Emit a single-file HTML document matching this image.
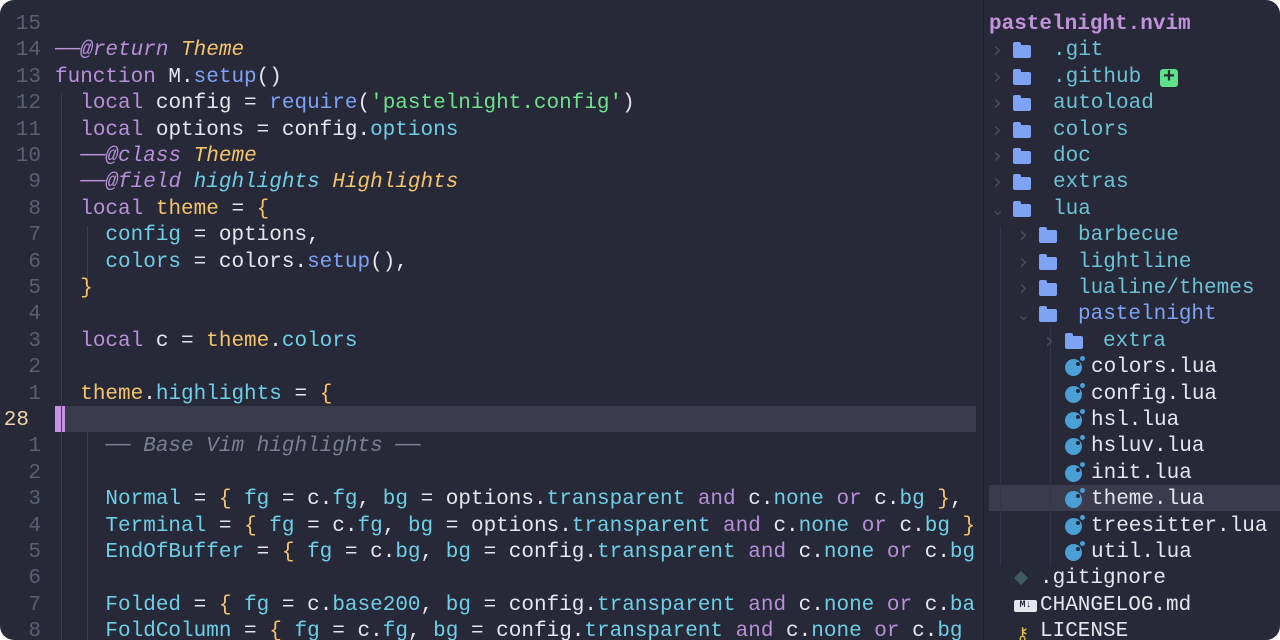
<!DOCTYPE html>
<html><head><meta charset="utf-8"><style>
html,body{margin:0;padding:0;background:#fff;}
#w{position:relative;width:1280px;height:640px;background:#272838;border-radius:14px;overflow:hidden;font-family:"Liberation Mono",monospace;font-size:21px;}
.l{position:absolute;left:0;height:26.4px;line-height:26.4px;white-space:pre;color:#e6e6ee;margin-top:2px}
.n{position:absolute;width:41px;text-align:right;color:#5c5f70;}
.t{position:absolute;left:55px;}
.k{color:#b690d8}.f{color:#7ea2f4}.s{color:#6ee28c}.p{color:#6ed0e6}.y{color:#f4c56c}.c{color:#7c7f90;font-style:italic}.ci{font-style:italic}
.g{position:absolute;width:1px;background:#3c3e50;}
.r{position:absolute;height:26.4px;line-height:26.4px;white-space:pre;color:#6cc3d3;margin-top:2px}
.ch{position:absolute;color:#4a4c5e;font-size:22px;font-family:"DejaVu Sans",sans-serif}
.fd{position:absolute;width:18px;height:13px;background:#7ea2f4;border-radius:2px;margin-top:7px}
.fd:before{content:"";position:absolute;left:0;top:-3px;width:8px;height:4px;background:#7ea2f4;border-radius:2px 2px 0 0}
.lu{position:absolute;width:17px;height:17px;border-radius:50%;background:#4a9fd6;margin-top:4px}
.lu:after{content:"";position:absolute;right:2px;top:3px;width:4px;height:4px;border-radius:50%;background:#272838}
.lu:before{content:"";position:absolute;right:-3px;top:-3px;width:5px;height:5px;border-radius:50%;background:#4a9fd6}
</style></head><body><div id="w">
<div style="position:absolute;left:55px;top:406px;width:921px;height:26.4px;background:#3a3c4e"></div>
<div style="position:absolute;left:55px;top:406px;width:10px;height:26.4px;background:#c992e4"></div>
<div style="position:absolute;left:983px;top:0;width:1px;height:640px;background:#1e1f2c"></div>
<div style="position:absolute;left:989px;top:485px;width:291px;height:26.4px;background:#3a3c4e"></div>
<div class="g" style="left:61px;top:94px;height:546px"></div>
<div class="g" style="left:87px;top:226px;height:53px"></div>
<div class="g" style="left:87px;top:432px;height:208px"></div>
<div class="g" style="left:1000px;top:226px;height:340px;background:#33354a"></div>
<div class="g" style="left:1050px;top:326px;height:240px;background:#33354a"></div>

<div class="l" style="top:10px"><span class="n">15</span></div>
<div class="l" style="top:36.4px"><span class="n">14</span><span class="t"><span class="k">──<span class="ci">@return</span></span> <span class="y ci">Theme</span></span></div>
<div class="l" style="top:62.8px"><span class="n">13</span><span class="t"><span class="k">function</span> M.<span class="f">setup</span>()</span></div>
<div class="l" style="top:89.2px"><span class="n">12</span><span class="t">  <span class="k">local</span> config = <span class="f">require</span>(<span class="s">'pastelnight.config'</span>)</span></div>
<div class="l" style="top:115.6px"><span class="n">11</span><span class="t">  <span class="k">local</span> options = config.<span class="p">options</span></span></div>
<div class="l" style="top:142px"><span class="n">10</span><span class="t">  <span class="k">──<span class="ci">@class</span></span> <span class="y ci">Theme</span></span></div>
<div class="l" style="top:168.4px"><span class="n">9</span><span class="t">  <span class="k">──<span class="ci">@field</span></span> <span class="p ci">highlights</span> <span class="y ci">Highlights</span></span></div>
<div class="l" style="top:194.8px"><span class="n">8</span><span class="t">  <span class="k">local</span> <span class="y">theme</span> = <span class="y">{</span></span></div>
<div class="l" style="top:221.2px"><span class="n">7</span><span class="t">    <span class="p">config</span> = options,</span></div>
<div class="l" style="top:247.6px"><span class="n">6</span><span class="t">    <span class="p">colors</span> = colors.<span class="f">setup</span>(),</span></div>
<div class="l" style="top:274px"><span class="n">5</span><span class="t">  <span class="y">}</span></span></div>
<div class="l" style="top:300.4px"><span class="n">4</span></div>
<div class="l" style="top:326.8px"><span class="n">3</span><span class="t">  <span class="k">local</span> c = <span class="y">theme</span>.<span class="p">colors</span></span></div>
<div class="l" style="top:353.2px"><span class="n">2</span></div>
<div class="l" style="top:379.6px"><span class="n">1</span><span class="t">  <span class="y">theme</span>.<span class="p">highlights</span> = <span class="y">{</span></span></div>
<div class="l" style="top:406px"><span class="n" style="color:#f0d6a6;left:-12px;width:41px">28</span></div>
<div class="l" style="top:432.4px"><span class="n">1</span><span class="t">    <span class="c">── Base Vim highlights ──</span></span></div>
<div class="l" style="top:458.8px"><span class="n">2</span></div>
<div class="l" style="top:485.2px"><span class="n">3</span><span class="t">    <span class="p">Normal</span> = <span class="y">{</span> <span class="p">fg</span> = c.<span class="p">fg</span>, <span class="p">bg</span> = options.<span class="p">transparent</span> <span class="k">and</span> c.<span class="p">none</span> <span class="k">or</span> c.<span class="p">bg</span> <span class="y">}</span>,</span></div>
<div class="l" style="top:511.6px"><span class="n">4</span><span class="t">    <span class="p">Terminal</span> = <span class="y">{</span> <span class="p">fg</span> = c.<span class="p">fg</span>, <span class="p">bg</span> = options.<span class="p">transparent</span> <span class="k">and</span> c.<span class="p">none</span> <span class="k">or</span> c.<span class="p">bg</span> <span class="y">}</span></span></div>
<div class="l" style="top:538px"><span class="n">5</span><span class="t">    <span class="p">EndOfBuffer</span> = <span class="y">{</span> <span class="p">fg</span> = c.<span class="p">bg</span>, <span class="p">bg</span> = config.<span class="p">transparent</span> <span class="k">and</span> c.<span class="p">none</span> <span class="k">or</span> c.<span class="p">bg</span></span></div>
<div class="l" style="top:564.4px"><span class="n">6</span></div>
<div class="l" style="top:590.8px"><span class="n">7</span><span class="t">    <span class="p">Folded</span> = <span class="y">{</span> <span class="p">fg</span> = c.<span class="p">base200</span>, <span class="p">bg</span> = config.<span class="p">transparent</span> <span class="k">and</span> c.<span class="p">none</span> <span class="k">or</span> c.<span class="p">ba</span></span></div>
<div class="l" style="top:617.2px"><span class="n">8</span><span class="t">    <span class="p">FoldColumn</span> = <span class="y">{</span> <span class="p">fg</span> = c.<span class="p">fg</span>, <span class="p">bg</span> = config.<span class="p">transparent</span> <span class="k">and</span> c.<span class="p">none</span> <span class="k">or</span> c.<span class="p">bg</span></span></div>
<div style="position:absolute;left:976px;top:0;width:7px;height:640px;background:#272838"></div>

<div class="r" style="left:989px;top:10px;color:#c292dc;font-weight:bold">pastelnight.nvim</div>
<div class="r" style="top:36.4px;left:993px"><span class="ch" style="left:0">›</span><span class="fd" style="left:20px"></span><span style="position:absolute;left:60px">.git</span></div>
<div class="r" style="top:62.8px;left:993px"><span class="ch" style="left:0">›</span><span class="fd" style="left:20px"></span><span style="position:absolute;left:60px">.github</span><span style="position:absolute;left:167px;top:4px;width:18px;height:18px;background:#5fe08a;border-radius:3px;color:#272838;font-weight:bold;font-size:20px;line-height:18px;text-align:center">+</span></div>
<div class="r" style="top:89.2px;left:993px"><span class="ch" style="left:0">›</span><span class="fd" style="left:20px"></span><span style="position:absolute;left:60px">autoload</span></div>
<div class="r" style="top:115.6px;left:993px"><span class="ch" style="left:0">›</span><span class="fd" style="left:20px"></span><span style="position:absolute;left:60px">colors</span></div>
<div class="r" style="top:142px;left:993px"><span class="ch" style="left:0">›</span><span class="fd" style="left:20px"></span><span style="position:absolute;left:60px">doc</span></div>
<div class="r" style="top:168.4px;left:993px"><span class="ch" style="left:0">›</span><span class="fd" style="left:20px"></span><span style="position:absolute;left:60px">extras</span></div>
<div class="r" style="top:194.8px;left:993px"><span class="ch" style="left:-2px;font-size:16px">⌄</span><span class="fd" style="left:20px"></span><span style="position:absolute;left:60px">lua</span></div>
<div class="r" style="top:221.2px;left:1019px"><span class="ch" style="left:0">›</span><span class="fd" style="left:20px"></span><span style="position:absolute;left:59px">barbecue</span></div>
<div class="r" style="top:247.6px;left:1019px"><span class="ch" style="left:0">›</span><span class="fd" style="left:20px"></span><span style="position:absolute;left:59px">lightline</span></div>
<div class="r" style="top:274px;left:1019px"><span class="ch" style="left:0">›</span><span class="fd" style="left:20px"></span><span style="position:absolute;left:59px">lualine/themes</span></div>
<div class="r" style="top:300.4px;left:1019px;color:#7ea2f4"><span class="ch" style="left:-2px;font-size:16px">⌄</span><span class="fd" style="left:20px"></span><span style="position:absolute;left:59px">pastelnight</span></div>
<div class="r" style="top:326.8px;left:1045px"><span class="ch" style="left:0">›</span><span class="fd" style="left:20px"></span><span style="position:absolute;left:58px">extra</span></div>
<div class="r" style="top:353.2px;left:1065px;color:#e6e6ee"><span class="lu" style="left:0"></span><span style="position:absolute;left:26px">colors.lua</span></div>
<div class="r" style="top:379.6px;left:1065px;color:#e6e6ee"><span class="lu" style="left:0"></span><span style="position:absolute;left:26px">config.lua</span></div>
<div class="r" style="top:406px;left:1065px;color:#e6e6ee"><span class="lu" style="left:0"></span><span style="position:absolute;left:26px">hsl.lua</span></div>
<div class="r" style="top:432.4px;left:1065px;color:#e6e6ee"><span class="lu" style="left:0"></span><span style="position:absolute;left:26px">hsluv.lua</span></div>
<div class="r" style="top:458.8px;left:1065px;color:#e6e6ee"><span class="lu" style="left:0"></span><span style="position:absolute;left:26px">init.lua</span></div>
<div class="r" style="top:485.2px;left:1065px;color:#e6e6ee"><span class="lu" style="left:0"></span><span style="position:absolute;left:26px">theme.lua</span></div>
<div class="r" style="top:511.6px;left:1065px;color:#e6e6ee"><span class="lu" style="left:0"></span><span style="position:absolute;left:26px">treesitter.lua</span></div>
<div class="r" style="top:538px;left:1065px;color:#e6e6ee"><span class="lu" style="left:0"></span><span style="position:absolute;left:26px">util.lua</span></div>
<div class="r" style="top:564.4px;left:1014px;color:#e6e6ee"><span style="position:absolute;left:2px;top:7px;width:10px;height:10px;background:#3f5a60;transform:rotate(45deg)"></span><span style="position:absolute;left:26px">.gitignore</span></div>
<div class="r" style="top:590.8px;left:1014px;color:#e6e6ee"><span style="position:absolute;left:0;top:7px;width:23px;height:12px;background:#e6e6ee;border-radius:2px;color:#272838;font-size:10px;line-height:12px;font-weight:bold;text-align:center">M↓</span><span style="position:absolute;left:26px">CHANGELOG.md</span></div>
<div class="r" style="top:617.2px;left:1014px;color:#e6e6ee"><span style="position:absolute;left:2px;top:4px;color:#e0c040;font-size:18px">⚷</span><span style="position:absolute;left:26px">LICENSE</span></div>
</div></body></html>
